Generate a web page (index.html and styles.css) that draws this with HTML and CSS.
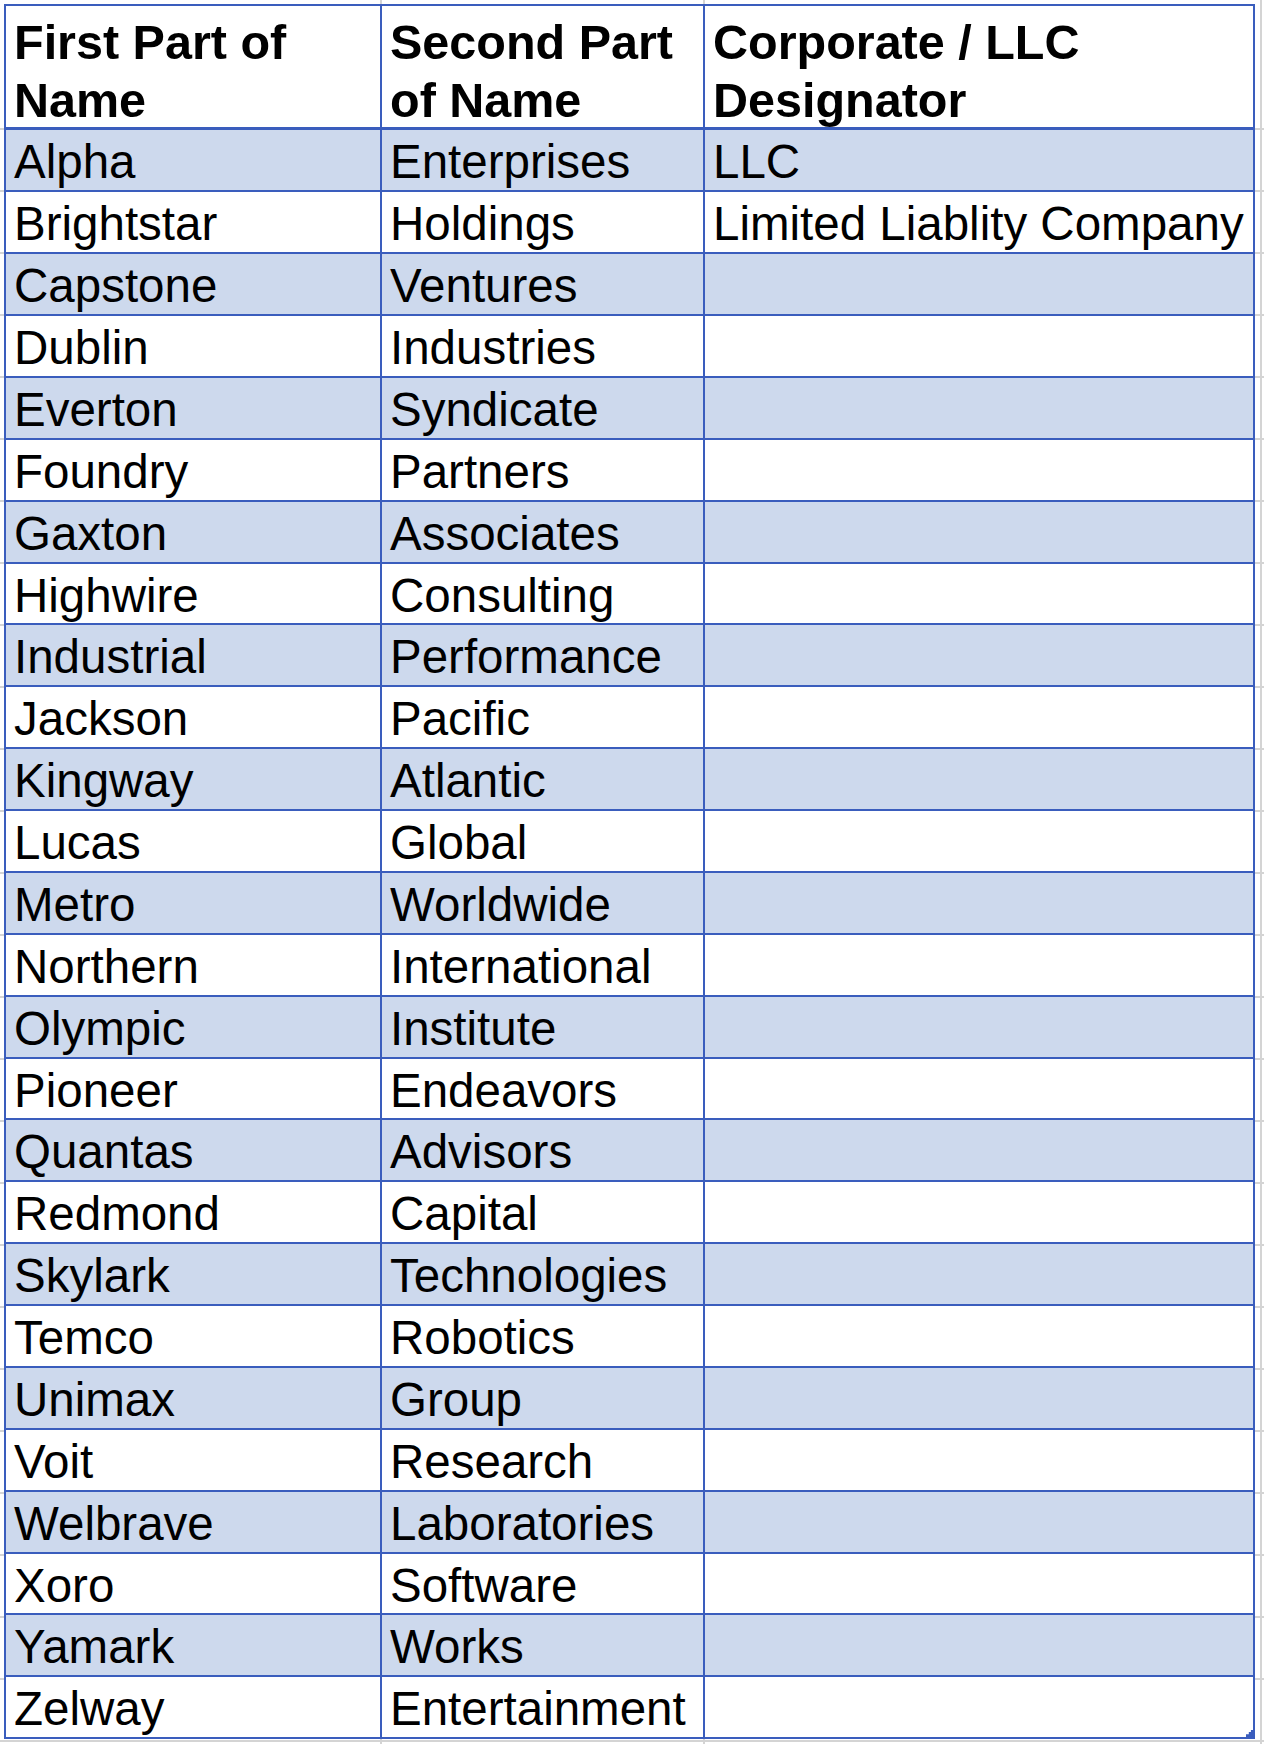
FILE: index.html
```html
<!DOCTYPE html>
<html lang="en">
<head>
<meta charset="utf-8">
<title>Company Names</title>
<link rel="stylesheet" href="styles.css">
</head>
<body>
<div class="sheet">
  <div class="cell head">First Part of Name</div>
  <div class="cell head">Second Part of Name</div>
  <div class="cell head">Corporate / LLC Designator</div>

  <div class="cell band">Alpha</div><div class="cell band">Enterprises</div><div class="cell band">LLC</div>
  <div class="cell">Brightstar</div><div class="cell">Holdings</div><div class="cell">Limited Liablity Company</div>
  <div class="cell band">Capstone</div><div class="cell band">Ventures</div><div class="cell band"></div>
  <div class="cell">Dublin</div><div class="cell">Industries</div><div class="cell"></div>
  <div class="cell band">Everton</div><div class="cell band">Syndicate</div><div class="cell band"></div>
  <div class="cell">Foundry</div><div class="cell">Partners</div><div class="cell"></div>
  <div class="cell band">Gaxton</div><div class="cell band">Associates</div><div class="cell band"></div>
  <div class="cell">Highwire</div><div class="cell">Consulting</div><div class="cell"></div>
  <div class="cell band">Industrial</div><div class="cell band">Performance</div><div class="cell band"></div>
  <div class="cell">Jackson</div><div class="cell">Pacific</div><div class="cell"></div>
  <div class="cell band">Kingway</div><div class="cell band">Atlantic</div><div class="cell band"></div>
  <div class="cell">Lucas</div><div class="cell">Global</div><div class="cell"></div>
  <div class="cell band">Metro</div><div class="cell band">Worldwide</div><div class="cell band"></div>
  <div class="cell">Northern</div><div class="cell">International</div><div class="cell"></div>
  <div class="cell band">Olympic</div><div class="cell band">Institute</div><div class="cell band"></div>
  <div class="cell">Pioneer</div><div class="cell">Endeavors</div><div class="cell"></div>
  <div class="cell band">Quantas</div><div class="cell band">Advisors</div><div class="cell band"></div>
  <div class="cell">Redmond</div><div class="cell">Capital</div><div class="cell"></div>
  <div class="cell band">Skylark</div><div class="cell band">Technologies</div><div class="cell band"></div>
  <div class="cell">Temco</div><div class="cell">Robotics</div><div class="cell"></div>
  <div class="cell band">Unimax</div><div class="cell band">Group</div><div class="cell band"></div>
  <div class="cell">Voit</div><div class="cell">Research</div><div class="cell"></div>
  <div class="cell band">Welbrave</div><div class="cell band">Laboratories</div><div class="cell band"></div>
  <div class="cell">Xoro</div><div class="cell">Software</div><div class="cell"></div>
  <div class="cell band">Yamark</div><div class="cell band">Works</div><div class="cell band"></div>
  <div class="cell">Zelway</div><div class="cell">Entertainment</div><div class="cell last"><span class="handle"></span></div>
</div>
</body>
</html>
```

FILE: styles.css
```css
html, body {
  margin: 0;
  padding: 0;
}

body {
  width: 1264px;
  height: 1744px;
  overflow: hidden;
  font-family: "Liberation Sans", Arial, sans-serif;
  color: #000;
  background-color: #fff;
  background-image:
    linear-gradient(to right, transparent 380px, #d4d4d4 380px, #d4d4d4 382px, transparent 382px, transparent 703px, #d4d4d4 703px, #d4d4d4 705px, transparent 705px, transparent 1260px, #d4d4d4 1260px, #d4d4d4 1262px, transparent 1262px),
    linear-gradient(#fff, #fff),
    repeating-linear-gradient(to bottom, #d4d4d4 0, #d4d4d4 2px, transparent 2px, transparent 62px);
  background-size: 1264px 1744px, 1264px 124px, 1264px 1744px;
  background-position: 0 0, 0 4px, 0 128px;
  background-repeat: no-repeat, no-repeat, repeat-y;
}

.sheet {
  display: grid;
  grid-template-columns: 374px 321px 548px;
  gap: 2px;
  padding: 2px;
  margin: 4px 0 0 4px;
  width: max-content;
  background: #3a5dbd;
}

.cell {
  box-sizing: border-box;
  background: #fff;
  height: 60px;
  padding: 3px 8px 0;
  font-size: 47.5px;
  line-height: 58px;
  white-space: nowrap;
  overflow: hidden;
}

/* a few rows are a pixel shorter, as in the sheet */
.cell:nth-child(n+25):nth-child(-n+27),
.cell:nth-child(n+49):nth-child(-n+51),
.cell:nth-child(n+73):nth-child(-n+75) {
  height: 59px;
}

.cell.band {
  background: #cdd9ed;
}

.cell.head {
  height: 122px;
  padding-top: 7px;
  border-bottom: 1px solid #3a5dbd;
  font-size: 48.5px;
  font-weight: bold;
  white-space: normal;
  line-height: 58px;
}

.cell.last {
  position: relative;
}

.handle {
  position: absolute;
  right: 0;
  bottom: 0;
  width: 7px;
  height: 7px;
  background: #3a5dbd;
  clip-path: polygon(100% 0, 100% 100%, 0 100%, 0 60%, 40% 60%, 40% 30%, 70% 30%, 70% 0);
}
```
